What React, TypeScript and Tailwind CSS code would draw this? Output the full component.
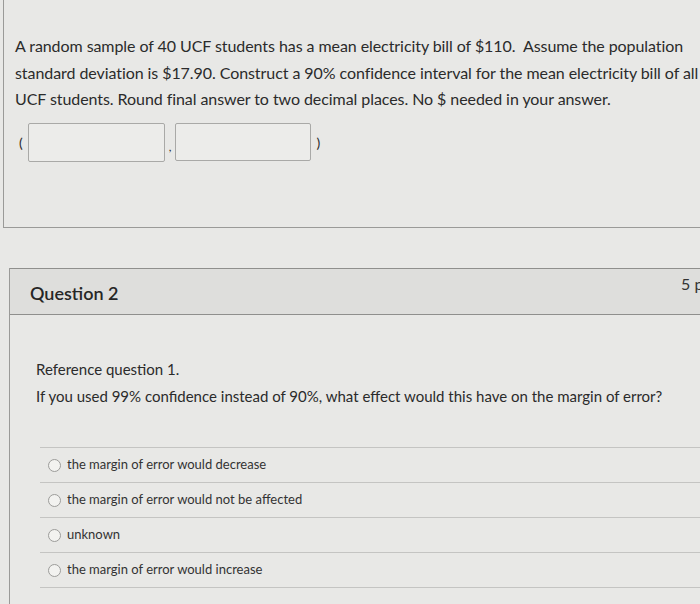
export default function App() {
  const options = [
    'the margin of error would decrease',
    'the margin of error would not be affected',
    'unknown',
    'the margin of error would increase',
  ];

  return (
    <div
      className="w-[700px] h-[604px] overflow-hidden bg-[#e8e8e6] text-[#2b2b2b]"
      style={{ fontFamily: 'Lato, "Open Sans", sans-serif' }}
    >
      {/* Question 1 body */}
      <div className="ml-[3px] w-[720px] h-[228px] border-l border-b border-[#9a9a98] pt-[33px]">
        <p className="pl-[11px] pr-2 text-[16px] leading-[26.5px] tracking-[-0.07px] w-[720px]">
          A random sample of 40 UCF students has a mean electricity bill of $110.&nbsp; Assume the population
          standard deviation is $17.90. Construct a 90% confidence interval for the mean electricity bill of all
          UCF students. Round final answer to two decimal places. No $ needed in your answer.
        </p>
        <div className="mt-[10px] ml-[15px] flex items-center text-[14px]">
          <span className="mr-[5px]">(</span>
          <div className="w-[137px] h-[39px] border border-[#a9a9a7] rounded-[2px] bg-[#ececea]" />
          <span className="mx-[4px] mt-[10px] text-[12px]">,</span>
          <div className="w-[136px] h-[38px] border border-[#a9a9a7] rounded-[2px] bg-[#ececea]" />
          <span className="ml-[5px]">)</span>
        </div>
      </div>

      {/* Question 2 */}
      <div className="mt-[40px] ml-[9px] w-[720px] h-[336px] border-l border-[#9a9a98]">
        <div className="h-[47px] flex items-center justify-between border-t border-b border-[#8f8f8d] bg-[#dededc] pl-[20px] pr-[13px]">
          <span className="text-[18px] font-semibold text-[#262626] mt-[4px]">Question 2</span>
          <span className="text-[16px] text-[#333] -mt-[16px]">5 pts</span>
        </div>
        <div className="pl-[26px] pt-[44px]">
          <p className="text-[15px] leading-[20px]">Reference question 1.</p>
          <p className="mt-[7px] text-[15px] leading-[20px]">
            If you used 99% confidence instead of 90%, what effect would this have on the margin of error?
          </p>
          <div className="mt-[41px] ml-[4px] border-t border-[#c4c4c2]">
            {options.map((o) => (
              <div key={o} className="flex items-center h-[35px] pl-[8px] border-b border-[#c4c4c2]">
                <span className="w-[13px] h-[13px] rounded-full border border-[#9c9c9a] bg-[#f2f2f0] mr-[6px]" />
                <span className="text-[13px] text-[#333]">{o}</span>
              </div>
            ))}
          </div>
        </div>
      </div>
    </div>
  );
}
